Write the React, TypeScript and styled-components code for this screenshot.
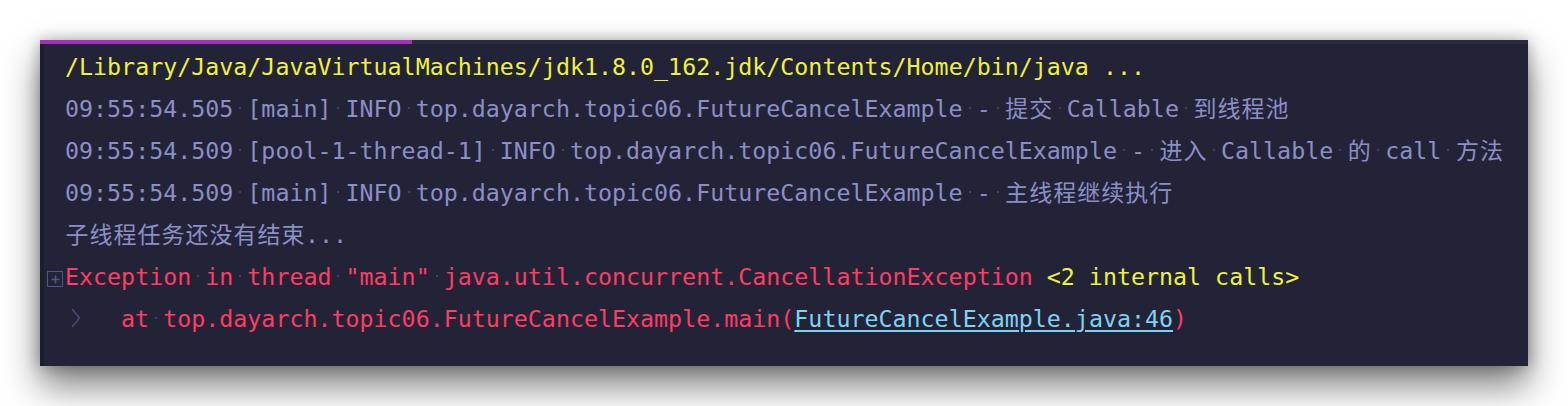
import React from "react";
import styled, { createGlobalStyle } from "styled-components";

const GlobalStyle = createGlobalStyle`
  html, body { margin: 0; padding: 0; background: #ffffff; }
  #root { width: 1568px; height: 406px; }
`;

const C = {
  bg: "#222336",
  yellow: "#eef23a",
  lav: "#8b8fc6",
  red: "#ff3c64",
  cyan: "#7dd3f3",
  dim: "#484c76",
};

const Page = styled.div`
  padding: 40px 40px 0 40px;
  box-sizing: border-box;
  width: 1568px;
  height: 406px;
`;

const Window = styled.div`
  width: 1488px;
  height: 326px;
  background: ${C.bg};
  border-left: 4px solid #1d1e2d;
  box-sizing: border-box;
  display: flex;
  flex-direction: column;
  box-shadow: 0 20px 34px rgba(0, 0, 0, 0.5), 0 0 14px rgba(0, 0, 0, 0.3);
`;

const Track = styled.div`
  height: 4px;
  margin-left: -4px;
  background: #2a2b3e;
  display: flex;
  flex-shrink: 0;
`;

const Fill = styled.div<{ $pct: number }>`
  width: ${(p) => p.$pct}%;
  background: #a631b9;
`;

const Console = styled.div`
  padding: 2px 0 0 21px;
  font-family: "DejaVu Sans Mono", "Noto Sans CJK SC", monospace;
  font-size: 23.3px;
  line-height: 42px;
`;

const Line = styled.div<{ $color: string }>`
  position: relative;
  height: 42px;
  white-space: pre;
  color: ${(p) => p.$color};
`;

const Seg = styled.span<{ $color: string }>`
  color: ${(p) => p.$color};
`;

const Link = styled.span`
  color: ${C.cyan};
  text-decoration: underline;
  text-decoration-thickness: 1.5px;
  text-underline-offset: 3px;
`;

const Sp = styled.span`
  display: inline-block;
  width: 1ch;
  position: relative;
  &::after {
    content: "";
    position: absolute;
    left: calc(50% - 1px);
    top: 19px;
    width: 2px;
    height: 2px;
    border-radius: 1px;
    background: #484b74;
  }
`;

const Cell = styled.span`
  display: inline-block;
  width: 24px;
  text-align: center;
  font-family: "Noto Sans CJK SC", sans-serif;
  font-size: 23px;
  line-height: 23px;
`;

const Fold = styled.span`
  position: absolute;
  left: -18px;
  top: 15px;
  width: 16px;
  height: 16px;
  box-sizing: border-box;
  border: 1.6px solid #50548a;
  display: flex;
  align-items: center;
  justify-content: center;
`;

const Tab = styled.span`
  display: inline-block;
  width: 4ch;
  height: 42px;
  vertical-align: top;
  position: relative;
`;

const TabArrow = styled.svg`
  position: absolute;
  left: 6px;
  top: 10px;
`;

const cjkRe = /[\u3000-\u9fff\uff00-\uffef]/;

function Rich({ text, dots = true }: { text: string; dots?: boolean }) {
  const out: React.ReactNode[] = [];
  let buf = "";
  const flush = (k: string) => {
    if (buf) {
      out.push(<React.Fragment key={k}>{buf}</React.Fragment>);
      buf = "";
    }
  };
  Array.from(text).forEach((ch, i) => {
    if (ch === " " && dots) {
      flush("t" + i);
      out.push(<Sp key={"s" + i}> </Sp>);
    } else if (cjkRe.test(ch)) {
      flush("t" + i);
      out.push(<Cell key={"c" + i}>{ch}</Cell>);
    } else {
      buf += ch;
    }
  });
  flush("end");
  return <>{out}</>;
}

export default function App() {
  return (
    <>
      <GlobalStyle />
      <Page>
        <Window>
          <Track>
            <Fill $pct={25} />
          </Track>
          <Console>
            <Line $color={C.yellow}>
              /Library/Java/JavaVirtualMachines/jdk1.8.0_162.jdk/Contents/Home/bin/java ...
            </Line>
            <Line $color={C.lav}>
              <Rich text="09:55:54.505 [main] INFO top.dayarch.topic06.FutureCancelExample - 提交 Callable 到线程池" />
            </Line>
            <Line $color={C.lav}>
              <Rich text="09:55:54.509 [pool-1-thread-1] INFO top.dayarch.topic06.FutureCancelExample - 进入 Callable 的 call 方法" />
            </Line>
            <Line $color={C.lav}>
              <Rich text="09:55:54.509 [main] INFO top.dayarch.topic06.FutureCancelExample - 主线程继续执行" />
            </Line>
            <Line $color={C.lav}>
              <Rich text="子线程任务还没有结束..." />
            </Line>
            <Line $color={C.red}>
              <Fold>
                <svg width="9" height="9" viewBox="0 0 9 9">
                  <path d="M4.5 0.5V8.5M0.5 4.5H8.5" stroke="#50548a" strokeWidth="1.6" />
                </svg>
              </Fold>
              <Rich text={'Exception in thread "main" java.util.concurrent.CancellationException'} />
              <Seg $color={C.yellow}> &lt;2 internal calls&gt;</Seg>
            </Line>
            <Line $color={C.red}>
              <Tab>
                <TabArrow width="10" height="20" viewBox="0 0 10 20">
                  <path d="M1 1L8.5 10L1 19" fill="none" stroke={C.dim} strokeWidth="1.6" />
                </TabArrow>
              </Tab>
              <Rich text="at top.dayarch.topic06.FutureCancelExample.main(" />
              <Link>FutureCancelExample.java:46</Link>)
            </Line>
          </Console>
        </Window>
      </Page>
    </>
  );
}
